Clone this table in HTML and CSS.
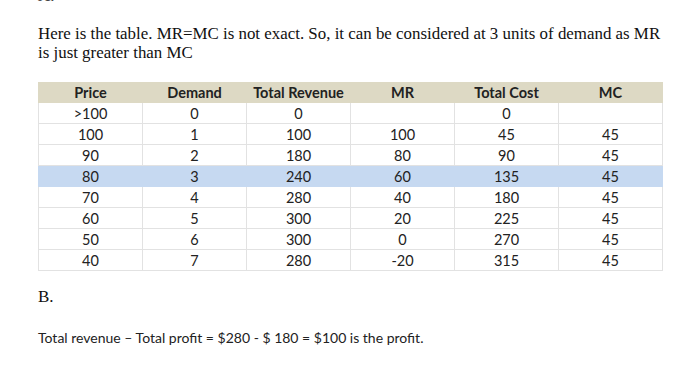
FILE: index.html
```html
<!DOCTYPE html>
<html lang="en">
<head>
  <meta charset="UTF-8" />
  <title>Answer - MR and MC</title>
  <link rel="stylesheet" href="styles.css">
</head>
<body>
  <div class="page">
    <p class="cut">A.</p>
    <p class="intro">Here is the table. MR=MC is not exact. So, it can be considered at 3 units of demand as MR is just greater than MC</p>

    <table class="data">
      <thead>
        <tr>
          <th>Price</th>
          <th>Demand</th>
          <th>Total Revenue</th>
          <th>MR</th>
          <th>Total Cost</th>
          <th>MC</th>
        </tr>
      </thead>
      <tbody>
        <tr><td>&gt;100</td><td>0</td><td>0</td><td></td><td>0</td><td></td></tr>
        <tr><td>100</td><td>1</td><td>100</td><td>100</td><td>45</td><td>45</td></tr>
        <tr><td>90</td><td>2</td><td>180</td><td>80</td><td>90</td><td>45</td></tr>
        <tr class="pick"><td>80</td><td>3</td><td>240</td><td>60</td><td>135</td><td>45</td></tr>
        <tr><td>70</td><td>4</td><td>280</td><td>40</td><td>180</td><td>45</td></tr>
        <tr><td>60</td><td>5</td><td>300</td><td>20</td><td>225</td><td>45</td></tr>
        <tr><td>50</td><td>6</td><td>300</td><td>0</td><td>270</td><td>45</td></tr>
        <tr><td>40</td><td>7</td><td>280</td><td>-20</td><td>315</td><td>45</td></tr>
      </tbody>
    </table>

    <p class="part">B.</p>
    <p class="answer">Total revenue &ndash; Total profit = $280 - $ 180 = $100 is the profit.</p>
  </div>
</body>
</html>
```

FILE: styles.css
```css
* {
  box-sizing: border-box;
  margin: 0;
  padding: 0;
}

body {
  background: #fff;
  color: #111;
}

.page {
  padding: 0 0 0 38px;
}

.cut {
  font-family: 'Liberation Serif', serif;
  font-size: 17px;
  line-height: 18px;
  margin-top: -13px;
  color: #444;
}

.intro {
  font-family: 'Liberation Serif', serif;
  font-size: 16.9px;
  line-height: 19px;
  margin-top: 19px;
  width: 630px;
}

.data {
  border-collapse: collapse;
  margin-top: 20px;
  font-family: Lato, sans-serif;
  font-size: 14.5px;
  color: #222;
}

.data th,
.data td {
  width: 104px;
  height: 21px;
  text-align: center;
  border: 1px solid #e2e2e2;
  padding: 0;
}

.data th {
  background: #ddd9c4;
  border-color: #ddd9c4;
  font-weight: 700;
  height: 20px;
}

.data .pick td {
  background: #c6d9f1;
  border-color: #c6d9f1;
}

.part {
  font-family: 'Liberation Serif', serif;
  font-size: 17px;
  margin-top: 16px;
}

.answer {
  font-family: Lato, sans-serif;
  font-size: 14px;
  margin-top: 22px;
  color: #222;
}
```
